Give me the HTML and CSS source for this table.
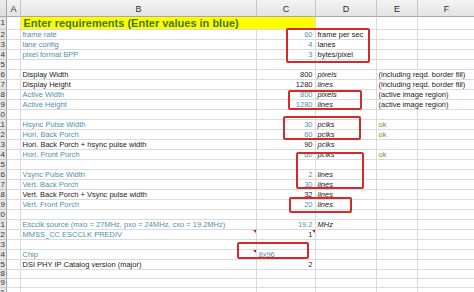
FILE: index.html
```html
<!DOCTYPE html>
<html>
<head>
<meta charset="utf-8">
<link rel="stylesheet" href="styles.css">
</head>
<body>
<div class="sheet">
  <div class="row hdr"><div class="corner"></div><div>A</div><div>B</div><div>C</div><div>D</div><div>E</div><div>F</div></div>
  <div class="row title-row"><div class="rh"><span>1</span></div><div></div><div class="title">Enter requirements (Enter values in blue)</div><div></div><div></div><div></div></div>
  <div class="row"><div class="rh"><span>2</span></div><div></div><div class="in">frame rate</div><div class="num in">60</div><div>frame per sec</div><div></div><div></div></div>
  <div class="row"><div class="rh"><span>3</span></div><div></div><div class="in">lane config</div><div class="num in">4</div><div>lanes</div><div></div><div></div></div>
  <div class="row"><div class="rh"><span>4</span></div><div></div><div class="in">pixel format BPP</div><div class="num in">3</div><div>bytes/pixel</div><div></div><div></div></div>
  <div class="row"><div class="rh"><span>5</span></div><div></div><div></div><div></div><div></div><div></div><div></div></div>
  <div class="row"><div class="rh"><span>6</span></div><div></div><div>Display Width</div><div class="num">800</div><div class="unit">pixels</div><div class="over">(including reqd. border fill)</div><div></div></div>
  <div class="row"><div class="rh"><span>7</span></div><div></div><div>Display Height</div><div class="num">1280</div><div class="unit">lines</div><div class="over">(including reqd. border fill)</div><div></div></div>
  <div class="row"><div class="rh"><span>8</span></div><div></div><div class="in">Active Width</div><div class="num in">800</div><div class="unit">pixels</div><div class="over">(active image region)</div><div></div></div>
  <div class="row"><div class="rh"><span>9</span></div><div></div><div class="in">Active Height</div><div class="num in">1280</div><div class="unit">lines</div><div class="over">(active image region)</div><div></div></div>
  <div class="row"><div class="rh"><span>10</span></div><div></div><div></div><div></div><div></div><div></div><div></div></div>
  <div class="row"><div class="rh"><span>11</span></div><div></div><div class="in">Hsync Pulse Width</div><div class="num in">30</div><div class="unit">pclks</div><div class="ok">ok</div><div></div></div>
  <div class="row"><div class="rh"><span>12</span></div><div></div><div class="in">Hori. Back Porch</div><div class="num in">60</div><div class="unit">pclks</div><div class="ok">ok</div><div></div></div>
  <div class="row"><div class="rh"><span>13</span></div><div></div><div>Hori. Back Porch + hsync pulse width</div><div class="num">90</div><div class="unit">pclks</div><div></div><div></div></div>
  <div class="row"><div class="rh"><span>14</span></div><div></div><div class="in">Hori. Front Porch</div><div class="num in">60</div><div class="unit">pclks</div><div class="ok">ok</div><div></div></div>
  <div class="row"><div class="rh"><span>15</span></div><div></div><div></div><div></div><div></div><div></div><div></div></div>
  <div class="row"><div class="rh"><span>16</span></div><div></div><div class="in">Vsync Pulse Width</div><div class="num in">2</div><div class="unit">lines</div><div></div><div></div></div>
  <div class="row"><div class="rh"><span>17</span></div><div></div><div class="in">Vert. Back Porch</div><div class="num in">30</div><div class="unit">lines</div><div></div><div></div></div>
  <div class="row"><div class="rh"><span>18</span></div><div></div><div>Vert. Back Porch + Vsync pulse width</div><div class="num">32</div><div class="unit">lines</div><div></div><div></div></div>
  <div class="row"><div class="rh"><span>19</span></div><div></div><div class="in">Vert. Front Porch</div><div class="num in">20</div><div class="unit">lines</div><div></div><div></div></div>
  <div class="row"><div class="rh"><span>20</span></div><div></div><div></div><div></div><div></div><div></div><div></div></div>
  <div class="row"><div class="rh"><span>21</span></div><div></div><div class="in">Escclk source (mxo = 27MHz, pxo = 24MHz, cxo = 19.2MHz)</div><div class="num in">19.2</div><div class="unit">MHz</div><div></div><div></div></div>
  <div class="row"><div class="rh"><span>22</span></div><div></div><div class="in note">MMSS_CC ESCCLK PREDIV</div><div class="num note">1</div><div></div><div></div><div></div></div>
  <div class="row"><div class="rh"><span>23</span></div><div></div><div></div><div></div><div></div><div></div><div></div></div>
  <div class="row"><div class="rh"><span>24</span></div><div></div><div class="in note">Chip</div><div class="in">8x96</div><div></div><div></div><div></div></div>
  <div class="row"><div class="rh"><span>25</span></div><div></div><div>DSI PHY IP Catalog version (major)</div><div class="num">2</div><div></div><div></div><div></div></div>
  <div class="row short"><div class="rh"><span>28</span></div><div></div><div></div><div></div><div></div><div></div><div></div></div>
  <div class="row short"><div class="rh"><span>29</span></div><div></div><div></div><div></div><div></div><div></div><div></div></div>
  <div class="row"><div class="rh"><span>31</span></div><div></div><div></div><div></div><div></div><div></div><div></div></div>

  <div class="mark m1"></div>
  <div class="mark m2"></div>
  <div class="mark m3"></div>
  <div class="mark m4"></div>
  <div class="mark m5"></div>
  <div class="mark m6"></div>
</div>
</body>
</html>
```
FILE: styles.css
```css
html, body {
  margin: 0;
  padding: 0;
  background: #ffffff;
}
body {
  width: 474px;
  height: 292px;
  overflow: hidden;
  font-family: "Liberation Sans", Arial, sans-serif;
}
.sheet {
  position: relative;
  width: 476px;
}
.row {
  display: grid;
  grid-template-columns: 7px 14px 236px 59px 61px 41px 58px;
  height: 10px;
}
.row > div {
  box-sizing: border-box;
  border-right: 1px solid #dadada;
  border-bottom: 1px solid #dadada;
  font-size: 7.5px;
  line-height: 9px;
  white-space: nowrap;
  padding: 0 2px 0 1.5px;
  color: #1a1a1a;
  position: relative;
}
.row.short { height: 9px; }
.row.short > div { line-height: 8px; }

.hdr { height: 17px; }
.hdr > div {
  background: linear-gradient(#f4f4f4, #e3e3e3);
  border-right: 1px solid #c4c4c4;
  border-bottom: 1px solid #a8a8a8;
  font-size: 9px;
  line-height: 16px;
  padding: 0;
  text-align: center;
  color: #2c2c2c;
  padding-top: 2px;
  line-height: 14px;
}
.hdr > .corner {
  background: linear-gradient(#eeeeee, #dedede);
  border-right: 1px solid #a8a8a8;
}
.rh {
  background: #e6e6e6;
  display: flex;
  justify-content: flex-end;
  overflow: hidden;
}
.row > .rh {
  border-right: 1px solid #a8a8a8;
  border-bottom: 1px solid #c8c8c8;
  padding: 0 1px 0 0;
  color: #333333;
  font-size: 8px;
  background: #e6e6e6;
}
.rh span { flex: none; }

.title-row { height: 13px; }
.title-row > div { line-height: 12px; }
.row > .title {
  grid-column: span 2;
  background: #ffff00;
  color: #3b7a1c;
  font-weight: bold;
  font-size: 11px;
  line-height: 12px;
  padding-left: 2.5px;
}
.row > .in { color: #4f8fae; }
.row > .num { text-align: right; padding-right: 2.5px; }
.row > .unit { font-style: italic; }
.row > .over { border-right: none; }
.row > .ok { color: #5c9e32; }

.note::after {
  content: "";
  position: absolute;
  top: 0;
  right: 0;
  border-top: 3px solid #c8102e;
  border-left: 3px solid transparent;
}

.mark {
  position: absolute;
  box-sizing: border-box;
  border: 2px solid #d42a2a;
  border-radius: 2px;
}
.m1 { left: 286px; top: 28px; width: 84px; height: 35px; }
.m2 { left: 288px; top: 90px; width: 74px; height: 20px; }
.m3 { left: 283px; top: 116px; width: 78px; height: 24px; }
.m4 { left: 296px; top: 152px; width: 68px; height: 37px; }
.m5 { left: 289px; top: 197px; width: 63px; height: 16px; }
.m6 { left: 237px; top: 242px; width: 72px; height: 17px; }
```
